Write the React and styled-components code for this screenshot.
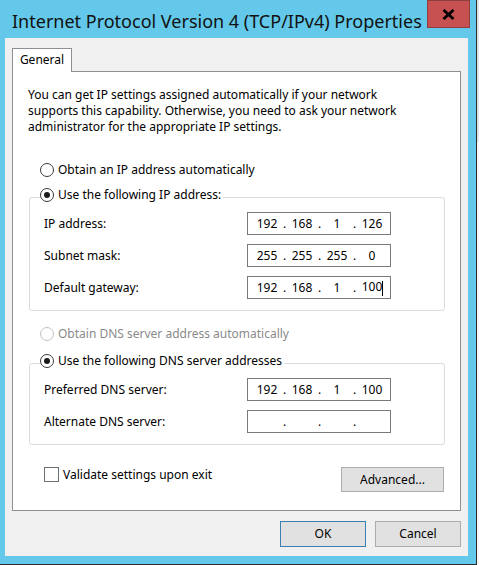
import React from 'react'
import styled, { createGlobalStyle } from 'styled-components'

const GlobalStyle = createGlobalStyle`
  html, body {
    margin: 0;
    padding: 0;
  }
  body {
    width: 479px;
    height: 565px;
    overflow: hidden;
    font-family: "Noto Sans", "Open Sans", sans-serif;
    font-size: 12px;
    line-height: 16px;
    color: #000;
    background: #f4f4f4;
  }
  * {
    box-sizing: border-box;
  }
`

const Screen = styled.div`
  display: flex;
  width: 479px;
  height: 565px;
`

const Window = styled.div`
  display: flex;
  flex-direction: column;
  width: 477px;
  height: 565px;
  background: #63c8e9;
  border-right: 1px solid #2b2b2b;
  border-bottom: 1px solid #2b2b2b;
`

// the bit of another window peeking out on the right
const Behind = styled.div`
  flex: 1;
  background: linear-gradient(#e2e5e7 0 142px, #f7f7f7 142px);
`

const TitleBar = styled.div`
  display: flex;
  align-items: flex-start;
  height: 38px;
  padding: 0 6px 0 12px;
`

const Title = styled.div`
  flex: 1;
  padding-top: 9px;
  font-size: 18px;
  line-height: 24px;
  color: #111;
  white-space: nowrap;
  overflow: hidden;
`

const CloseButton = styled.div`
  display: flex;
  align-items: center;
  justify-content: center;
  width: 43px;
  height: 28px;
  background: #c75050;
  border: 1px solid #8f3e3e;
`

const Client = styled.div`
  flex: 1;
  display: flex;
  flex-direction: column;
  margin: 0 8px 8px 5px;
  padding: 10px 7px 9px;
  background: #f0f0f0;
`

const TabStrip = styled.div`
  display: flex;
`

const Tab = styled.div`
  position: relative;
  z-index: 1;
  width: 60px;
  height: 24px;
  margin-bottom: -1px;
  background: #fff;
  border: 1px solid #8e8f94;
  border-bottom: none;
  text-align: center;
  line-height: 21px;
`

const Panel = styled.div`
  flex: 0 0 440px;
  display: flex;
  flex-direction: column;
  padding: 15px 15px 18px;
  background: #fff;
  border: 1px solid #8e8f94;
`

const Intro = styled.p`
  max-width: 385px;
  margin: 0 0 27px;
`

const RadioLabel = styled.label`
  display: flex;
  align-items: center;
  gap: 4px;
  height: 16px;
  color: ${p => (p.$disabled ? '#8a8a8a' : '#000')};
  white-space: nowrap;
`

const RadioCircle = styled.span`
  display: flex;
  align-items: center;
  justify-content: center;
  width: 14px;
  height: 14px;
  border-radius: 50%;
  border: 1px solid ${p => (p.$disabled ? '#c2c2c2' : '#3a3a3a')};
  background: #fff;

  &::after {
    content: '';
    display: ${p => (p.$checked ? 'block' : 'none')};
    width: 6px;
    height: 6px;
    border-radius: 50%;
    background: #1a1a1a;
  }
`

const Option = styled.div`
  margin-left: 12px;
`

const Group = styled.fieldset`
  width: 416px;
  min-inline-size: auto;
  margin: ${p => p.$gap}px 0 15px 1px;
  padding: 0;
  border: 1px solid #dcdcdc;
  border-radius: 3px;
`

const Legend = styled.legend`
  margin-left: 10px;
  padding: 0 2px 4px 0;
`

const Fields = styled.div`
  display: grid;
  grid-template-columns: 203px 144px;
  grid-auto-rows: 23px;
  row-gap: 9px;
  align-items: center;
  padding: 5px 0 11px 14px;
`

const IpBox = styled.div`
  display: flex;
  align-items: center;
  width: 144px;
  height: 23px;
  padding-left: 6px;
  background: #fff;
  border: 1px solid #7a7a7a;
`

const Octet = styled.span`
  width: 26px;
  text-align: center;
  white-space: nowrap;
`

const Dot = styled.span`
  width: 9px;
  text-align: center;
`

const Caret = styled.span`
  display: inline-block;
  width: 1px;
  height: 15px;
  margin-right: -1px;
  vertical-align: middle;
  background: #000;
`

const Footer = styled.div`
  display: flex;
  justify-content: space-between;
  align-items: flex-start;
  margin-top: 7px;
`

const CheckRow = styled.label`
  display: flex;
  align-items: center;
  gap: 4px;
  height: 15px;
  margin-left: 16px;
`

const CheckBox = styled.span`
  width: 15px;
  height: 15px;
  background: #fff;
  border: 1px solid #6f6f6f;
`

const Button = styled.button`
  width: 86px;
  height: 26px;
  padding: 0;
  font: inherit;
  color: #000;
  background: #e1e1e1;
  border: 1px solid ${p => (p.$default ? '#3c7fb1' : '#adadad')};
`

const AdvancedButton = styled(Button)`
  width: 103px;
  height: 25px;
  margin-right: 1px;
`

const ButtonRow = styled.div`
  display: flex;
  justify-content: flex-end;
  gap: 9px;
  margin-top: 10px;
`

const Radio = ({ checked, disabled, children }) => (
  <RadioLabel $disabled={disabled}>
    <RadioCircle $checked={checked} $disabled={disabled} />
    {children}
  </RadioLabel>
)

const IpField = ({ value, caret }) => {
  const parts = value.split('.')
  return (
    <IpBox>
      {parts.map((p, i) => (
        <React.Fragment key={i}>
          {i > 0 && <Dot>.</Dot>}
          <Octet>
            {p}
            {caret && i === parts.length - 1 && <Caret />}
          </Octet>
        </React.Fragment>
      ))}
    </IpBox>
  )
}

const CloseIcon = () => (
  <svg width="13" height="11" viewBox="0 0 13 11">
    <path d="M1.5 1 L11.5 10 M11.5 1 L1.5 10" stroke="#000" strokeWidth="2.8" />
  </svg>
)

export default function App () {
  return (
    <Screen>
      <GlobalStyle />
      <Window>
        <TitleBar>
          <Title>Internet Protocol Version 4 (TCP/IPv4) Properties</Title>
          <CloseButton>
            <CloseIcon />
          </CloseButton>
        </TitleBar>
        <Client>
          <TabStrip>
            <Tab>General</Tab>
          </TabStrip>
          <Panel>
            <Intro>
              You can get IP settings assigned automatically if your network
              supports this capability. Otherwise, you need to ask your network
              administrator for the appropriate IP settings.
            </Intro>

            <Option>
              <Radio>Obtain an IP address automatically</Radio>
            </Option>
            <Group $gap={9}>
              <Legend>
                <Radio checked>Use the following IP address:</Radio>
              </Legend>
              <Fields>
                <span>IP address:</span>
                <IpField value="192.168.1.126" />
                <span>Subnet mask:</span>
                <IpField value="255.255.255.0" />
                <span>Default gateway:</span>
                <IpField value="192.168.1.100" caret />
              </Fields>
            </Group>

            <Option>
              <Radio disabled>Obtain DNS server address automatically</Radio>
            </Option>
            <Group $gap={11}>
              <Legend>
                <Radio checked>Use the following DNS server addresses</Radio>
              </Legend>
              <Fields>
                <span>Preferred DNS server:</span>
                <IpField value="192.168.1.100" />
                <span>Alternate DNS server:</span>
                <IpField value="..." />
              </Fields>
            </Group>

            <Footer>
              <CheckRow>
                <CheckBox />
                Validate settings upon exit
              </CheckRow>
              <AdvancedButton>Advanced...</AdvancedButton>
            </Footer>
          </Panel>
          <ButtonRow>
            <Button $default>OK</Button>
            <Button>Cancel</Button>
          </ButtonRow>
        </Client>
      </Window>
      <Behind />
    </Screen>
  )
}
